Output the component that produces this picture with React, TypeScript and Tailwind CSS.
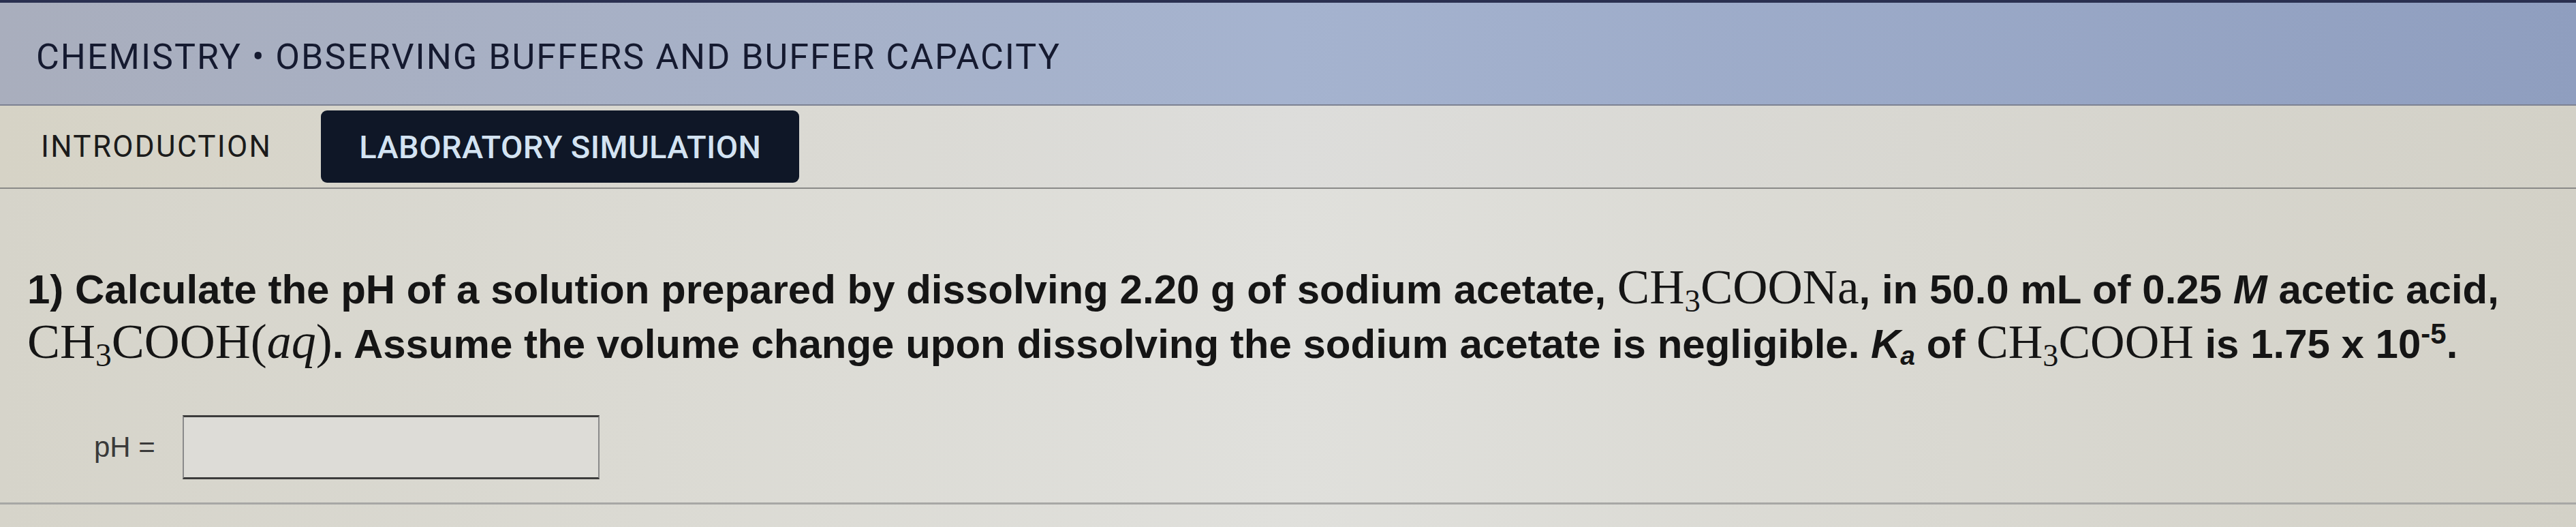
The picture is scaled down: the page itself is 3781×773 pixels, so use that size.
export default function App() {
  return (
    <div className="h-[773px] w-full overflow-hidden flex flex-col font-['Roboto',sans-serif] text-[#141414]">
      {/* top edge */}
      <div className="h-[4px] shrink-0 bg-[#2a3050]" />

      {/* title band */}
      <header className="h-[151px] shrink-0 border-b-2 border-[#7d8292] bg-linear-to-r from-[#a9aebd] via-[#a5b3cf] to-[#8f9ebf] pl-[53px] pt-[54px]">
        <h1 className="text-[52px] leading-none tracking-[2px] font-normal text-[#151a30] whitespace-nowrap">
          CHEMISTRY • OBSERVING BUFFERS AND BUFFER CAPACITY
        </h1>
      </header>

      {/* tabs */}
      <nav className="h-[122px] shrink-0 flex items-center gap-[72px] pl-[60px] border-b-2 border-[#8a8a88] bg-linear-to-r from-[#d6d3c6] via-[#dddddb] to-[#d3d1c7]">
        <span className="text-[44px] leading-none tracking-[2.3px] text-[#1b1b1b]">INTRODUCTION</span>
        <span className="h-[106px] flex items-center px-[56px] rounded-[9px] bg-[#0f1727] text-[47px] leading-none tracking-[0.4px] font-medium text-[#d3e3f2]">
          LABORATORY SIMULATION
        </span>
      </nav>

      {/* question */}
      <main className="flex-1 flex flex-col bg-linear-to-r from-[#d6d4ca] via-[#e0e0dc] to-[#d3d1c7]">
        <div className="pt-[108px] pl-[40px] font-['Liberation_Sans',Arial,sans-serif] text-[60px] leading-[80px] font-bold text-[#151515]">
          <div className="whitespace-nowrap">
            1) Calculate the pH of a solution prepared by dissolving 2.20 g of sodium acetate,{" "}
            <span className="font-['Liberation_Serif',serif] text-[71px] leading-none font-normal">
              CH<sub className="text-[0.66em]">3</sub>COONa
            </span>
            , in 50.0 mL of 0.25 <i>M</i> acetic acid,
          </div>
          <div className="whitespace-nowrap">
            <span className="font-['Liberation_Serif',serif] text-[72px] leading-none font-normal">
              CH<sub className="text-[0.66em]">3</sub>COOH(<i>aq</i>)
            </span>
            . Assume the volume change upon dissolving the sodium acetate is negligible.{" "}
            <i>K</i>
            <sub className="text-[0.65em] italic">a</sub> of{" "}
            <span className="font-['Liberation_Serif',serif] text-[70px] leading-none font-normal">
              CH<sub className="text-[0.66em]">3</sub>COOH
            </span>{" "}
            is 1.75 x 10<sup className="text-[0.7em]">-5</sup>.
          </div>
        </div>

        <div className="mt-[64px] pl-[138px] flex items-center gap-[40px]">
          <label className="font-['Liberation_Sans',Arial,sans-serif] text-[42px] leading-none text-[#3a3a3a] whitespace-nowrap">
            pH =
          </label>
          <input
            aria-label="pH"
            className="w-[612px] h-[94px] border-x-2 border-y-[3px] border-x-[#8a8a8a] border-y-[#3c3c3c] bg-[#dddcd7] outline-none"
          />
        </div>

        <div className="mt-[34px] border-t-[3px] border-[#a7a7a5]" />
      </main>
    </div>
  );
}
